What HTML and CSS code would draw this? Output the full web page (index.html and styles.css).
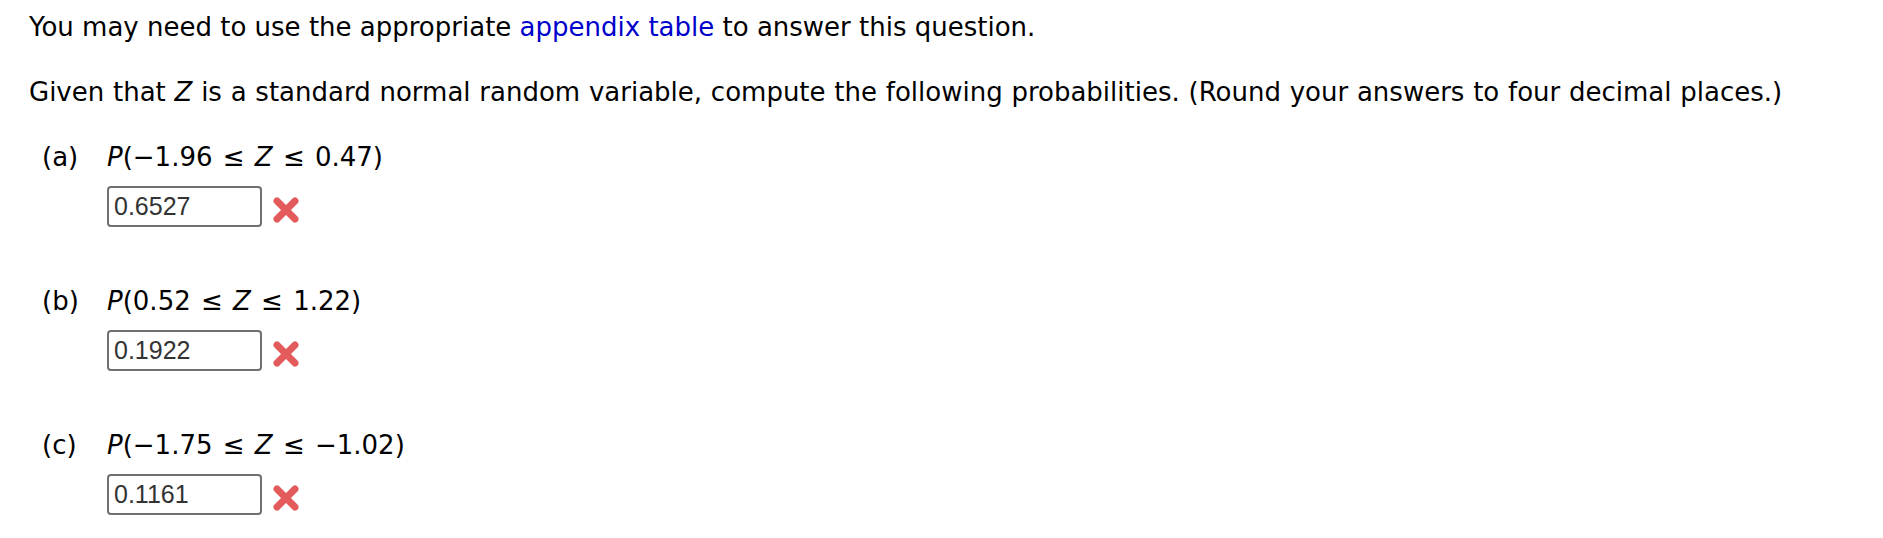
FILE: index.html
```html
<!DOCTYPE html>
<html>
<head>
<meta charset="utf-8">
<link rel="stylesheet" href="styles.css">
</head>
<body>
<div class="question">
  <p class="line">You may need to use the appropriate <a class="link" href="#">appendix table</a> to answer this question.</p>
  <p class="line gap wide">Given that <i>Z</i> is a standard normal random variable, compute the following probabilities. (Round your answers to four decimal places.)</p>
  <div class="parts">
    <div class="part">
      <div class="label"><span class="tag">(a)</span><span class="math"><i>P</i>(−1.96 ≤ <i>Z</i> ≤ 0.47)</span></div>
      <div class="answer"><span class="box">0.6527</span><svg class="wrong" viewBox="0 0 28 26" width="28" height="26"><path d="M5 4 L23 22 M23 4 L5 22"/></svg></div>
    </div>
    <div class="part">
      <div class="label"><span class="tag">(b)</span><span class="math"><i>P</i>(0.52 ≤ <i>Z</i> ≤ 1.22)</span></div>
      <div class="answer"><span class="box">0.1922</span><svg class="wrong" viewBox="0 0 28 26" width="28" height="26"><path d="M5 4 L23 22 M23 4 L5 22"/></svg></div>
    </div>
    <div class="part">
      <div class="label"><span class="tag">(c)</span><span class="math"><i>P</i>(−1.75 ≤ <i>Z</i> ≤ −1.02)</span></div>
      <div class="answer"><span class="box">0.1161</span><svg class="wrong" viewBox="0 0 28 26" width="28" height="26"><path d="M5 4 L23 22 M23 4 L5 22"/></svg></div>
    </div>
  </div>
</div>
</body>
</html>
```

FILE: styles.css
```css
html, body {
  margin: 0;
  padding: 0;
  background: #fff;
}
.question {
  padding: 12px 0 0 29px;
  font-family: "DejaVu Sans", Verdana, sans-serif;
  font-size: 26px;
  line-height: 30px;
  color: #000;
}
.line {
  margin: 0;
  white-space: nowrap;
}
.gap {
  margin-top: 35px;
}
.wide {
  word-spacing: 0.5px;
}
.link {
  color: #0000cc;
  text-decoration: none;
}
.parts {
  margin-top: 35px;
  display: flex;
  flex-direction: column;
  gap: 59px;
}
.part {
  display: flex;
  flex-direction: column;
}
.label {
  display: flex;
  padding-left: 13px;
  white-space: nowrap;
}
.tag {
  width: 65px;
}
.math {
  word-spacing: 2px;
}
.answer {
  display: flex;
  align-items: center;
  margin-top: 14px;
  padding-left: 78px;
}
.box {
  box-sizing: border-box;
  width: 155px;
  height: 41px;
  border: 2px solid #707070;
  border-radius: 4px;
  padding-left: 5px;
  font-family: "Liberation Sans", Arial, sans-serif;
  font-size: 25px;
  line-height: 37px;
  color: #333;
}
.wrong {
  margin-left: 10px;
  margin-top: 6px;
}
.wrong path {
  stroke: #e35b5b;
  stroke-width: 7;
  stroke-linecap: round;
  fill: none;
}
```
